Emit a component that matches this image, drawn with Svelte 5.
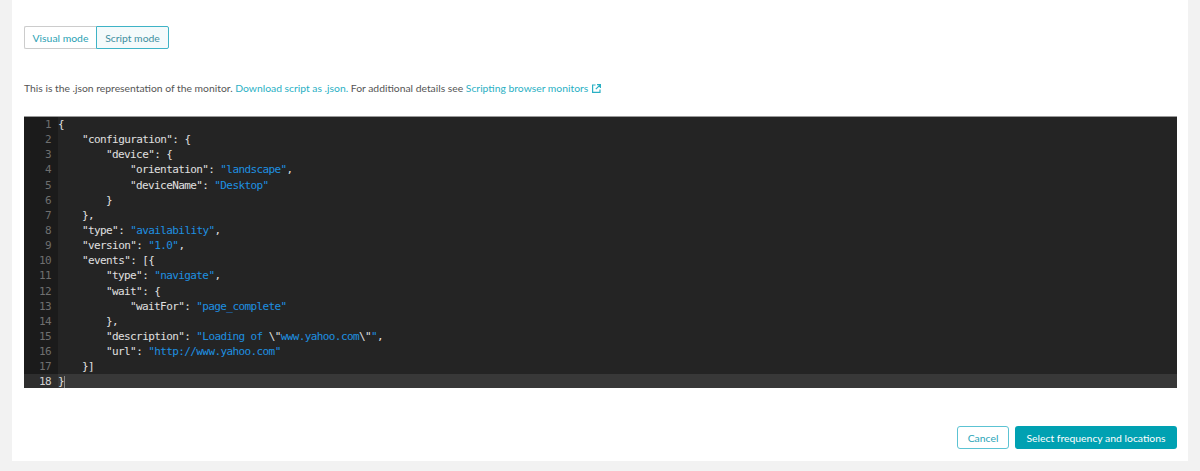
<script>
    const lines = [
        [0, [["p", "{"]]],
        [1, [["k", '"configuration"'], ["p", ": {"]]],
        [2, [["k", '"device"'], ["p", ": {"]]],
        [3, [["k", '"orientation"'], ["p", ": "], ["s", '"landscape"'], ["p", ","]]],
        [3, [["k", '"deviceName"'], ["p", ": "], ["s", '"Desktop"']]],
        [2, [["p", "}"]]],
        [1, [["p", "},"]]],
        [1, [["k", '"type"'], ["p", ": "], ["s", '"availability"'], ["p", ","]]],
        [1, [["k", '"version"'], ["p", ": "], ["s", '"1.0"'], ["p", ","]]],
        [1, [["k", '"events"'], ["p", ": [{"]]],
        [2, [["k", '"type"'], ["p", ": "], ["s", '"navigate"'], ["p", ","]]],
        [2, [["k", '"wait"'], ["p", ": {"]]],
        [3, [["k", '"waitFor"'], ["p", ": "], ["s", '"page_complete"']]],
        [2, [["p", "},"]]],
        [2, [["k", '"description"'], ["p", ": "], ["s", '"Loading of '], ["e", '\\"'], ["s", "www.yahoo.com"], ["e", '\\"'], ["s", '"'], ["p", ","]]],
        [2, [["k", '"url"'], ["p", ": "], ["s", '"http://www.yahoo.com"']]],
        [1, [["p", "}]"]]],
        [0, [["p", "}"]]],
    ];
</script>

<div class="card">
    <div class="toggle">
        <button class="mode">Visual mode</button>
        <button class="mode active">Script mode</button>
    </div>

    <p class="intro">
        This is the .json representation of the monitor.
        <a href="#script">Download script as .json.</a>
        For additional details see
        <a href="#docs">Scripting browser monitors</a><svg class="ext" width="9" height="9" viewBox="0 0 9 9" fill="none" stroke="#2ab0c4" stroke-width="1.2">
            <path d="M3.5 1H.6v7.4H8V5.5" />
            <path d="M5 .6h3.4V4M8.2.8 3.8 5.2" />
        </svg>
    </p>

    <div class="editor">
        {#each lines as [indent, tokens], i}
            <div class="line" class:current={i === lines.length - 1}>
                <span class="num">{i + 1}</span>
                <span class="code" style="padding-left: {indent * 24}px">{#each tokens as [type, text]}<span class={type}>{text}</span>{/each}{#if i === lines.length - 1}<span class="caret"></span>{/if}</span>
            </div>
        {/each}
    </div>

    <div class="actions">
        <button class="btn cancel">Cancel</button>
        <button class="btn primary">Select frequency and locations</button>
    </div>
</div>

<style>
    :global(body) {
        background: #f2f2f2;
        font-family: "Lato", sans-serif;
    }

    .card {
        width: 1176px;
        height: 461px;
        margin-left: 12px;
        padding: 26px 11px 0 12px;
        box-sizing: border-box;
        background: #fff;
    }

    .toggle {
        display: flex;
        height: 23px;
    }

    button {
        font-family: inherit;
        font-size: 10.4px;
        cursor: pointer;
    }

    .mode {
        width: 72px;
        padding: 0;
        background: #fff;
        color: #2a9fb3;
        border: 1px solid #ccc;
        border-right: none;
        border-radius: 2px 0 0 2px;
    }

    .mode.active {
        width: 73px;
        background: #f4fafb;
        color: #3f8e9f;
        border: 1px solid #3fb3c6;
        border-radius: 0 2px 2px 0;
    }

    .intro {
        margin: 32px 0 0;
        height: 15px;
        font-size: 10.35px;
        line-height: 15px;
        color: #555;
    }

    .intro a {
        color: #2ab0c4;
        text-decoration: none;
    }

    .ext {
        margin-left: 4px;
        vertical-align: -1px;
    }

    .editor {
        margin-top: 20px;
        height: 272px;
        box-sizing: border-box;
        padding-top: 0;
        background: #242424;
        border-top: 1px solid #9a9a9a;
        font-family: "DejaVu Sans Mono", monospace;
        font-size: 11px;
        letter-spacing: -0.6px;
        overflow: hidden;
    }

    .line {
        display: flex;
        height: 15.15px;
        line-height: 15.15px;
        white-space: pre;
    }

    .line.current {
        background: #383838;
    }

    .num {
        width: 27px;
        flex: none;
        padding-right: 7px;
        box-sizing: content-box;
        text-align: right;
        background: #1b1b1b;
        color: #6f6f6f;
    }

    .current .num {
        background: #2e2e2e;
        color: #d0d0d0;
    }

    .code {
        color: #d0d0d0;
    }

    .code .k, .code .p, .code .e {
        color: #e0e0e0;
    }

    .code .s {
        color: #1e90e0;
    }

    .caret {
        display: inline-block;
        width: 0;
        height: 13px;
        vertical-align: middle;
        border-left: 1px solid #8a8a8a;
    }

    .actions {
        display: flex;
        justify-content: flex-end;
        gap: 6px;
        margin-top: 38px;
    }

    .btn {
        height: 23px;
        padding: 0;
        border-radius: 3px;
    }

    .cancel {
        width: 52px;
        background: #fff;
        color: #2aa5b8;
        border: 1px solid #5cc3d3;
    }

    .primary {
        width: 162px;
        background: #00a1b2;
        color: #fff;
        border: none;
    }
</style>
